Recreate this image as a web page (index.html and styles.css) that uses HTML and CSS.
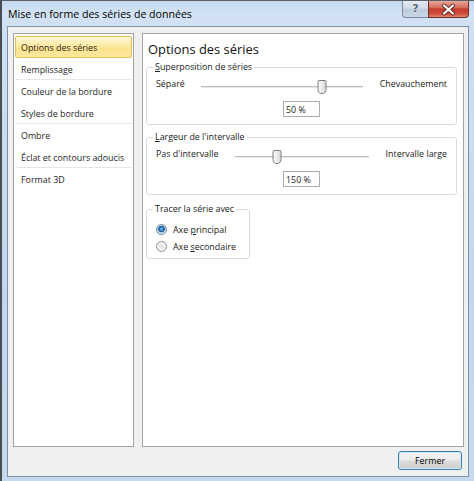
FILE: index.html
```html
<!DOCTYPE html>
<html lang="fr">
<head>
<meta charset="utf-8">
<title>Mise en forme des séries de données</title>
<link rel="stylesheet" href="styles.css">
</head>
<body>
<div class="window">
  <div class="titlebar">
    <span class="title">Mise en forme des séries de données</span>
    <div class="caption-buttons">
      <div class="cap-btn cap-help"><span class="help-glyph">?</span></div>
      <div class="cap-btn cap-close">
        <svg class="close-icon" width="41" height="17" viewBox="0 0 41 17">
          <path d="M16 4.5 L25 12.5 M25 4.5 L16 12.5" stroke="#5c2620" stroke-width="4" stroke-linecap="round" fill="none"/>
          <path d="M16 4.5 L25 12.5 M25 4.5 L16 12.5" stroke="#ffffff" stroke-width="2.2" stroke-linecap="round" fill="none"/>
        </svg>
      </div>
    </div>
  </div>
  <div class="client">
    <div class="panels">
      <ul class="nav">
        <li class="nav-item selected">Options des séries</li>
        <li class="nav-item group-end">Remplissage</li>
        <li class="nav-item">Couleur de la bordure</li>
        <li class="nav-item group-end">Styles de bordure</li>
        <li class="nav-item">Ombre</li>
        <li class="nav-item group-end">Éclat et contours adoucis</li>
        <li class="nav-item">Format 3D</li>
      </ul>
      <div class="content">
        <h1 class="heading">Options des séries</h1>
        <fieldset class="group group-overlap">
          <legend class="group-title"><u>S</u>uperposition de séries</legend>
          <div class="slider-row">
            <span class="slider-label">Séparé</span>
            <div class="slider"><span class="track"></span><span class="thumb" style="left: 75%"></span></div>
            <span class="slider-label">Chevauchement</span>
          </div>
          <div class="value-row"><input class="value" type="text" value="50 %" readonly></div>
        </fieldset>
        <fieldset class="group group-gap">
          <legend class="group-title"><u>L</u>argeur de l'intervalle</legend>
          <div class="slider-row">
            <span class="slider-label">Pas d'intervalle</span>
            <div class="slider slider-gap"><span class="track"></span><span class="thumb" style="left: 31%"></span></div>
            <span class="slider-label">Intervalle large</span>
          </div>
          <div class="value-row"><input class="value" type="text" value="150 %" readonly></div>
        </fieldset>
        <fieldset class="group group-axis">
          <legend class="group-title">Tracer la série avec</legend>
          <label class="radio-row"><span class="radio checked"></span><span>Axe <u>p</u>rincipal</span></label>
          <label class="radio-row"><span class="radio"></span><span>Axe <u>s</u>econdaire</span></label>
        </fieldset>
      </div>
    </div>
    <div class="footer">
      <button class="btn" type="button">Fermer</button>
    </div>
  </div>
</div>
</body>
</html>
```
FILE: styles.css
```css
* { box-sizing: border-box; }

html, body {
  margin: 0;
  padding: 0;
}

body {
  width: 474px;
  height: 481px;
  overflow: hidden;
  background: #3e4044;
  font-family: "Segoe UI", "Open Sans", "Liberation Sans", sans-serif;
  font-size: 8.9px;
  color: #1b1b1b;
}

.window {
  width: 474px;
  height: 481px;
  display: flex;
  flex-direction: column;
  border-top: 1px solid #5d6168;
  border-left: 2px solid #4a4d52;
  padding: 0 5px 4px 5px;
  background: linear-gradient(to bottom, #c3d8ef 0, #d3e3f5 12px, #cfe0f2 25px, #c2d7ee 60%, #c6daef 100%);
}

/* Title bar */
.titlebar {
  height: 25px;
  display: flex;
  align-items: flex-start;
  padding-left: 1px;
}

.title {
  margin-top: 6px;
  font-size: 10.6px;
  line-height: 14px;
  color: #000;
  white-space: nowrap;
}

.caption-buttons {
  margin-left: auto;
  display: flex;
}

.cap-btn {
  height: 17px;
  display: flex;
  align-items: center;
  justify-content: center;
}

.cap-help {
  width: 26px;
  border: 1px solid #7a8a9e;
  border-top: none;
  border-right: none;
  border-radius: 0 0 0 4px;
  background: linear-gradient(to bottom, #e3ebf4 0, #d2dde9 45%, #bccbdc 50%, #c9d7e6 100%);
}

.help-glyph {
  font-family: "DejaVu Sans", sans-serif;
  font-size: 11px;
  font-weight: bold;
  line-height: 14px;
  color: #56677d;
  text-shadow: 0 0 2px #ffffff;
}

.cap-btn.cap-close {
  width: 41px;
  border: 1px solid #6e3029;
  border-top: none;
  border-radius: 0 0 4px 0;
  background: linear-gradient(to bottom, #e5a69b 0, #d6705f 40%, #c63b2b 50%, #cf4e3b 80%, #e2866d 100%);
}

.close-icon { display: block; margin: 0 -1px; }

/* Client area */
.client {
  flex: 1;
  display: flex;
  flex-direction: column;
  border: 1px solid #7e91a8;
  background: #f0f0f0;
  padding: 6px 4px 0 5px;
}

.panels {
  display: flex;
  gap: 8px;
  height: 414px;
}

/* Left navigation */
.nav {
  width: 121px;
  margin: 0;
  padding: 2px 0 0;
  list-style: none;
  background: #ffffff;
  border: 1px solid #a3a3a3;
}

.nav-item {
  height: 22px;
  margin: 0 1px;
  padding: 0 5px;
  display: flex;
  align-items: center;
  white-space: nowrap;
  border: 1px solid transparent;
  color: #1e1e1e;
}

.nav-item.group-end {
  border-bottom-color: #e6e6e6;
}

.nav-item.selected {
  border-color: #e3c15c;
  border-radius: 2px;
  background: linear-gradient(to bottom, #fff7d3 0, #fdeaa4 45%, #fde38c 55%, #fce79c 100%);
}

/* Right content */
.content {
  flex: 1;
  background: #ffffff;
  border: 1px solid #a3a3a3;
  padding: 7px 6px 0 3px;
}

.heading {
  margin: 0 0 3px 2px;
  font-size: 12.9px;
  font-weight: normal;
  line-height: 16px;
  color: #111;
}

.group {
  margin: 0;
  min-width: 0;
  border: 1px solid #d5dde3;
  border-radius: 3px;
  padding: 3px 9px 7px 9px;
}

.group-title {
  margin-left: -3px;
  padding: 0 2px;
  line-height: 14px;
  color: #1b1b1b;
}

.group-overlap { margin-bottom: 5px; }
.group-gap { margin-bottom: 7px; }
.group-axis {
  width: 104px;
  padding: 5px 9px 3px 9px;
}

.slider-row {
  display: flex;
  align-items: flex-start;
}

.slider-label {
  line-height: 14px;
  white-space: nowrap;
}

.slider {
  flex: 1;
  position: relative;
  height: 16px;
  margin: 2px 17px 0 16px;
  display: flex;
  align-items: center;
}

.slider-gap { margin-left: 17px; }

.track {
  flex: 1;
  height: 2px;
  border-top: 1px solid #bcbcbc;
  border-bottom: 1px solid #e8e8e8;
}

.thumb {
  position: absolute;
  top: 1px;
  width: 9px;
  height: 14px;
  transform: translateX(-50%);
  border: 1px solid #7d7d7d;
  border-radius: 2px 2px 4px 4px / 2px 2px 5px 5px;
  background: linear-gradient(to right, #f9f9f9 0, #ececec 50%, #d6d6d6 100%);
}

.value-row {
  display: flex;
  justify-content: center;
  margin-top: 6px;
}

.value {
  width: 37px;
  height: 16px;
  margin: 0;
  padding: 0 2px;
  border: 1px solid #abadb3;
  background: #ffffff;
  font: inherit;
  color: #1b1b1b;
  outline: none;
}

.radio-row {
  display: flex;
  align-items: center;
  gap: 6px;
  height: 17px;
  white-space: nowrap;
}

.radio {
  width: 11px;
  height: 11px;
  flex: none;
  border-radius: 50%;
  border: 1px solid #8f9091;
  background: radial-gradient(circle at 50% 50%, #e3e3e3 0, #f3f3f3 60%, #fdfdfd 100%);
}

.radio.checked {
  border-color: #6f8aa2;
  background: radial-gradient(circle at 50% 45%, #8fd0f6 0, #3a8bd0 1.5px, #1b4f86 3px, #c2daeb 3.6px, #eaf2f8 100%);
}

/* Footer */
.footer {
  display: flex;
  justify-content: flex-end;
  padding: 4px 2px 0 0;
}

.btn {
  width: 64px;
  height: 19px;
  margin: 0;
  padding: 0;
  border: 1px solid #3c7fb1;
  border-radius: 3px;
  box-shadow: inset 0 0 0 1px #c6ecfb;
  background: linear-gradient(to bottom, #f4f4f4 0, #ececec 48%, #dcdcdc 52%, #d0d0d0 100%);
  font: inherit;
  color: #000;
}
```
